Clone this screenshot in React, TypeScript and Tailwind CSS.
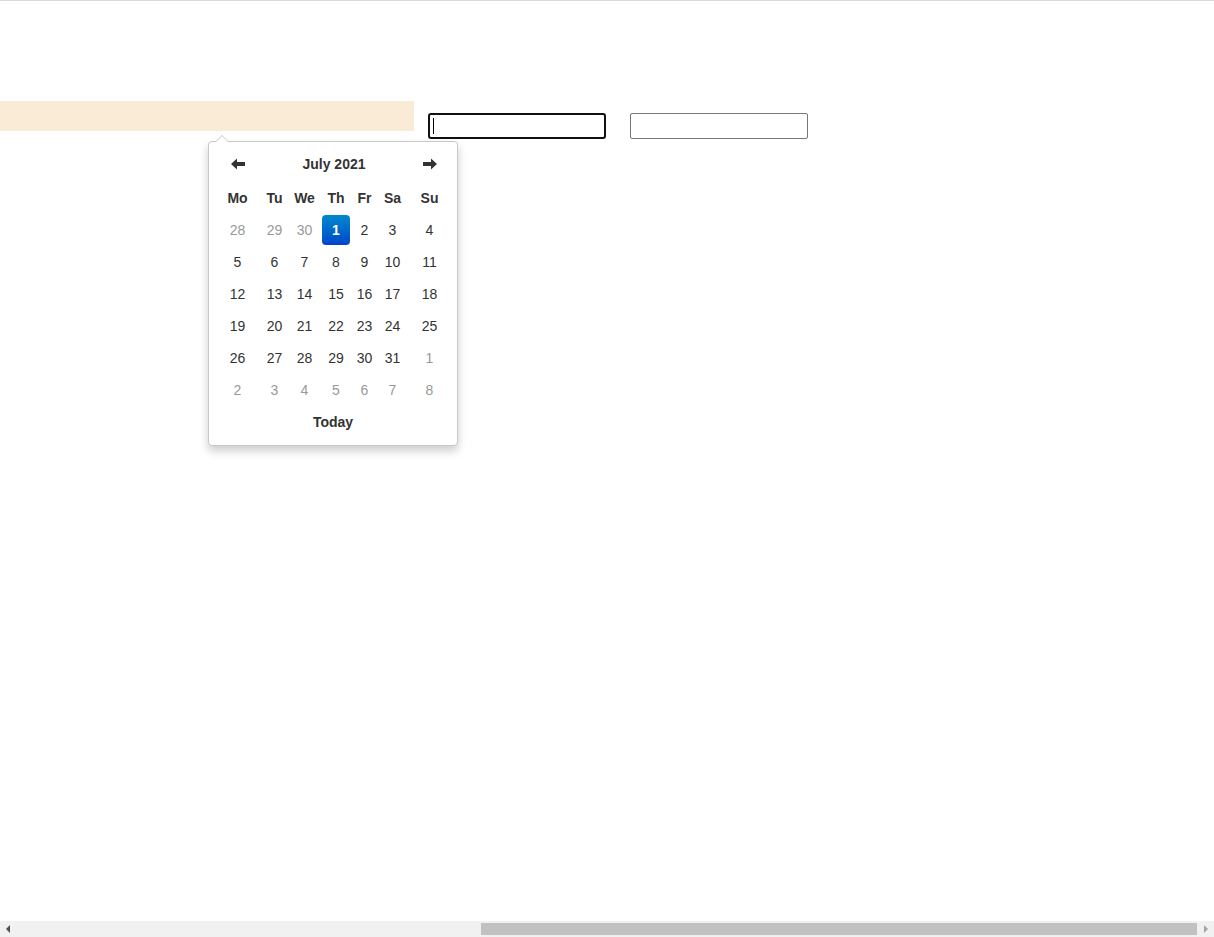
const weekDays = ['Mo', 'Tu', 'We', 'Th', 'Fr', 'Sa', 'Su'];

type Day = { n: number; muted?: boolean; active?: boolean };

const weeks: Day[][] = [
  [{ n: 28, muted: true }, { n: 29, muted: true }, { n: 30, muted: true }, { n: 1, active: true }, { n: 2 }, { n: 3 }, { n: 4 }],
  [{ n: 5 }, { n: 6 }, { n: 7 }, { n: 8 }, { n: 9 }, { n: 10 }, { n: 11 }],
  [{ n: 12 }, { n: 13 }, { n: 14 }, { n: 15 }, { n: 16 }, { n: 17 }, { n: 18 }],
  [{ n: 19 }, { n: 20 }, { n: 21 }, { n: 22 }, { n: 23 }, { n: 24 }, { n: 25 }],
  [{ n: 26 }, { n: 27 }, { n: 28 }, { n: 29 }, { n: 30 }, { n: 31 }, { n: 1, muted: true }],
  [{ n: 2, muted: true }, { n: 3, muted: true }, { n: 4, muted: true }, { n: 5, muted: true }, { n: 6, muted: true }, { n: 7, muted: true }, { n: 8, muted: true }],
];

const cols = 'grid grid-cols-[49px_25px_35px_28px_29px_27px_47px]';

function Arrow({ dir }: { dir: 'left' | 'right' }) {
  return (
    <svg width="14" height="12" viewBox="0 0 14 12" className={dir === 'right' ? 'rotate-180' : ''}>
      <path d="M0 6 L6 0.5 L6 4 L14 4 L14 8 L6 8 L6 11.5 Z" fill="#333" />
    </svg>
  );
}

function DatePicker() {
  return (
    <div className="absolute left-[208px] top-[140px] w-[250px] rounded-[4px] border border-[#c8c8c8] bg-white px-1 pt-1 pb-[6px] text-[14px] text-[#333] shadow-[0_5px_10px_rgba(0,0,0,0.2)]">
      {/* caret */}
      <div className="absolute -top-[7px] left-[6px] h-0 w-0 border-x-[7px] border-b-[7px] border-x-transparent border-b-[#c8c8c8]" />
      <div className="absolute -top-[6px] left-[7px] h-0 w-0 border-x-[6px] border-b-[6px] border-x-transparent border-b-white" />

      <div className={`${cols} h-[36px] items-center`}>
        <div className="flex justify-center"><Arrow dir="left" /></div>
        <div className="col-span-5 text-center font-bold">July 2021</div>
        <div className="flex justify-center"><Arrow dir="right" /></div>
      </div>

      <div className={`${cols} h-8 items-center font-bold`}>
        {weekDays.map((d) => (
          <div key={d} className="text-center">{d}</div>
        ))}
      </div>

      {weeks.map((w, i) => (
        <div key={i} className={`${cols} h-8 items-center`}>
          {w.map((d, j) =>
            d.active ? (
              <div key={j} className="flex h-[30px] items-center justify-center rounded-[4px] bg-gradient-to-b from-[#0088cc] to-[#0044cc] font-bold text-white">
                {d.n}
              </div>
            ) : (
              <div key={j} className={`text-center ${d.muted ? 'text-[#999]' : ''}`}>{d.n}</div>
            ),
          )}
        </div>
      ))}

      <div className="flex h-[33px] items-center justify-center font-bold">Today</div>
    </div>
  );
}

export default function App() {
  return (
    <div className="flex h-[937px] flex-col bg-white font-['Liberation_Sans',Arial,sans-serif]">
      <div className="h-px bg-[#dadada]" />
      <div className="relative flex-1">
        <div className="flex items-start pt-[100px]">
          <div className="h-[30px] w-[414px] bg-[#faebd7]" />
          <div className="ml-[14px] mt-[12px] flex h-[26px] w-[178px] items-center rounded-[3px] border-2 border-[#101010] pl-[3px]">
            <span className="h-4 w-px bg-black" />
          </div>
          <div className="ml-[24px] mt-[12px] h-[26px] w-[178px] rounded-[2px] border border-[#767676]" />
        </div>
        <DatePicker />
      </div>

      {/* horizontal scrollbar */}
      <div className="flex h-4 items-center bg-[#f1f1f1]">
        <div className="flex w-[16px] justify-center">
          <div className="h-0 w-0 border-y-[4px] border-r-[4px] border-y-transparent border-r-[#505050]" />
        </div>
        <div className="flex h-full flex-1 items-center pl-[465px] pr-[1px]">
          <div className="h-[12px] flex-1 bg-[#c1c1c1]" />
        </div>
        <div className="flex w-[16px] justify-center">
          <div className="h-0 w-0 border-y-[4px] border-l-[4px] border-y-transparent border-l-[#a3a3a3]" />
        </div>
      </div>
    </div>
  );
}
